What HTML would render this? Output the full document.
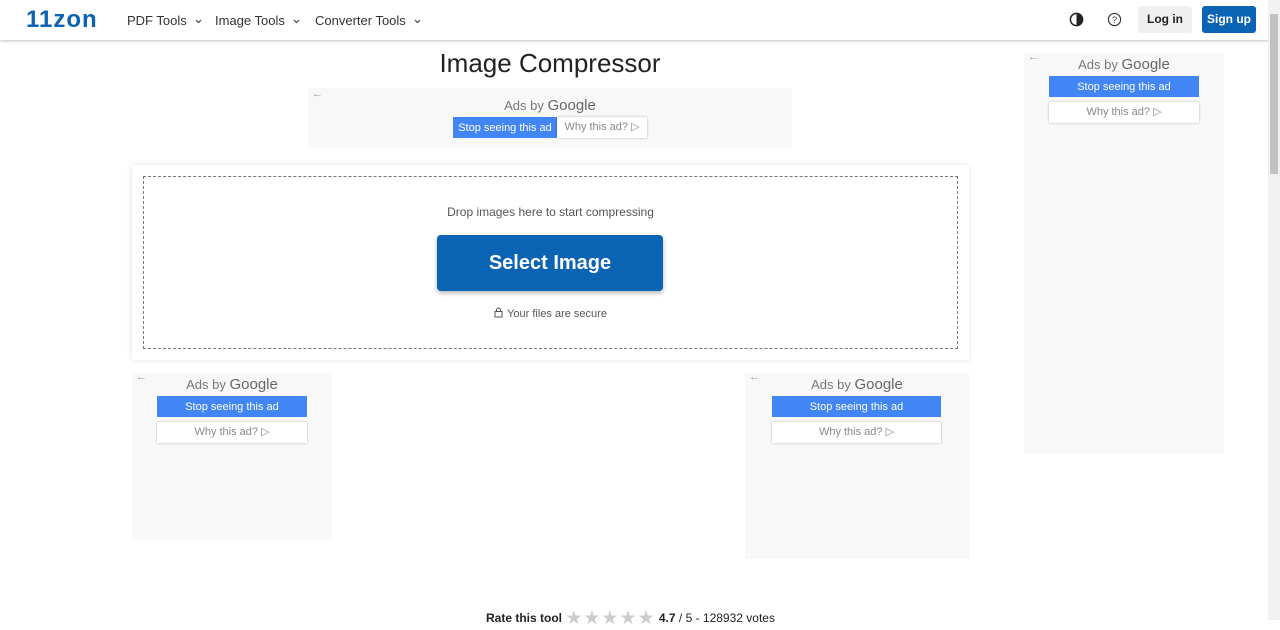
<!DOCTYPE html>
<html><head><meta charset="utf-8"><style>
*{box-sizing:border-box;margin:0;padding:0}
body{width:1280px;height:620px;overflow:hidden;background:#fff;font-family:"Liberation Sans",sans-serif;position:relative}
.hdr{position:absolute;left:0;top:0;width:1268px;height:40px;background:#fff;box-shadow:0 1px 3px rgba(0,0,0,.25)}
.logo{position:absolute;left:26px;top:6px;font-size:24px;font-weight:bold;color:#0b63b4;letter-spacing:1px}
.nav{position:absolute;top:13px;font-size:13px;color:#333}
.nav svg{margin-left:8px;vertical-align:1px}
.btn{position:absolute;top:6px;height:27px;border-radius:3px;font-size:12px;font-weight:bold;text-align:center;line-height:27px}
.sb{position:absolute;right:0;top:0;width:12px;height:620px;background:#f1f1f1}
.sb div{position:absolute;left:2px;top:14px;width:8px;height:160px;background:#c1c1c1}
.ad{position:absolute;background:#f8f8f8}
.ad .arr{position:absolute;left:4px;top:-2px;font-size:11px;color:#999}
.ad .t{position:absolute;width:100%;text-align:center;color:#777;font-size:13px}
.ad .t b{font-size:15px;font-weight:normal;color:#666}
.stop{position:absolute;background:#4285f4;color:#fff;font-size:11px;text-align:center;line-height:22px;height:21px}
.why{position:absolute;background:#fff;color:#888;font-size:11px;text-align:center;line-height:21px;height:21px;box-shadow:0 0 2px rgba(0,0,0,.3)}
</style></head><body>
<div class="hdr">
<div class="logo">11zon</div>
<div class="nav" style="left:127px">PDF Tools<svg width="7" height="5" viewBox="0 0 7 5"><path d="M1 1l2.5 2.5L6 1" fill="none" stroke="#444" stroke-width="1.2"/></svg></div>
<div class="nav" style="left:215px">Image Tools<svg width="7" height="5" viewBox="0 0 7 5"><path d="M1 1l2.5 2.5L6 1" fill="none" stroke="#444" stroke-width="1.2"/></svg></div>
<div class="nav" style="left:315px">Converter Tools<svg width="7" height="5" viewBox="0 0 7 5"><path d="M1 1l2.5 2.5L6 1" fill="none" stroke="#444" stroke-width="1.2"/></svg></div>
<svg style="position:absolute;left:1069px;top:12px" width="15" height="15" viewBox="0 0 16 16"><circle cx="8" cy="8" r="6.5" fill="none" stroke="#222" stroke-width="1.6"/><path d="M8 1.5A6.5 6.5 0 0 1 8 14.5Z" fill="#222"/></svg>
<svg style="position:absolute;left:1107px;top:12px" width="15" height="15" viewBox="0 0 16 16"><circle cx="8" cy="8" r="6.5" fill="none" stroke="#333" stroke-width="1.2"/><text x="8" y="11.5" font-size="10" text-anchor="middle" fill="#333" font-family="Liberation Sans">?</text></svg>
<div class="btn" style="left:1138px;width:54px;background:#f0f0f0;color:#222">Log in</div>
<div class="btn" style="left:1202px;width:54px;background:#0b63b4;color:#fff">Sign up</div>
</div>
<div class="sb"><div></div></div>
<div style="position:absolute;left:0;width:1100px;top:48px;text-align:center;font-size:26px;color:#222">Image Compressor</div>

<div class="ad" style="left:308px;top:88px;width:484px;height:60px"><div class="arr" style="top:0">&#8592;</div><div class="t" style="top:9px">Ads by <b>Google</b></div><div class="stop" style="left:145px;top:29px;width:104px">Stop seeing this ad</div><div class="why" style="left:249px;top:29px;width:90px">Why this ad? &#9655;</div></div>

<div class="ad" style="left:1024px;top:53px;width:200px;height:400px"><div class="arr">&#8592;</div><div class="t" style="top:3px">Ads by <b>Google</b></div><div class="stop" style="left:25px;top:23px;width:150px">Stop seeing this ad</div><div class="why" style="left:25px;top:49px;width:150px">Why this ad? &#9655;</div></div>

<div class="ad" style="left:132px;top:373px;width:200px;height:167px"><div class="arr">&#8592;</div><div class="t" style="top:3px">Ads by <b>Google</b></div><div class="stop" style="left:25px;top:23px;width:150px">Stop seeing this ad</div><div class="why" style="left:25px;top:49px;width:150px">Why this ad? &#9655;</div></div>

<div class="ad" style="left:745px;top:373px;width:224px;height:186px"><div class="arr">&#8592;</div><div class="t" style="top:3px">Ads by <b>Google</b></div><div class="stop" style="left:27px;top:23px;width:169px">Stop seeing this ad</div><div class="why" style="left:27px;top:49px;width:169px">Why this ad? &#9655;</div></div>

<div style="position:absolute;left:132px;top:165px;width:837px;height:195px;background:#fff;box-shadow:0 0 6px rgba(0,0,0,.12)">
<div style="position:absolute;left:11px;top:11px;width:815px;height:173px;border:1.5px dashed #777"></div>
<div style="position:absolute;left:0;width:100%;top:40px;text-align:center;font-size:12px;color:#555">Drop images here to start compressing</div>
<div style="position:absolute;left:305px;top:70px;width:226px;height:56px;background:#0b63b4;border-radius:4px;box-shadow:0 2px 5px rgba(0,0,0,.3);color:#fff;font-size:20px;font-weight:bold;text-align:center;line-height:56px">Select Image</div>
<div style="position:absolute;left:0;width:100%;top:142px;text-align:center;font-size:11px;color:#555"><svg width="9" height="11" viewBox="0 0 9 11" style="vertical-align:-1px;margin-right:4px"><rect x="1" y="4.5" width="7" height="5.5" fill="none" stroke="#555"/><path d="M2.5 4.5V3a2 2 0 0 1 4 0v1.5" fill="none" stroke="#555"/></svg>Your files are secure</div>
</div>

<div style="position:absolute;left:486px;top:607px;font-size:12px;color:#222;white-space:nowrap"><b>Rate this tool</b> <span style="color:#ccc;font-size:19px;letter-spacing:1px;vertical-align:-2px">★★★★★</span> <b>4.7</b> / 5 - 128932 votes</div>
</body></html>
